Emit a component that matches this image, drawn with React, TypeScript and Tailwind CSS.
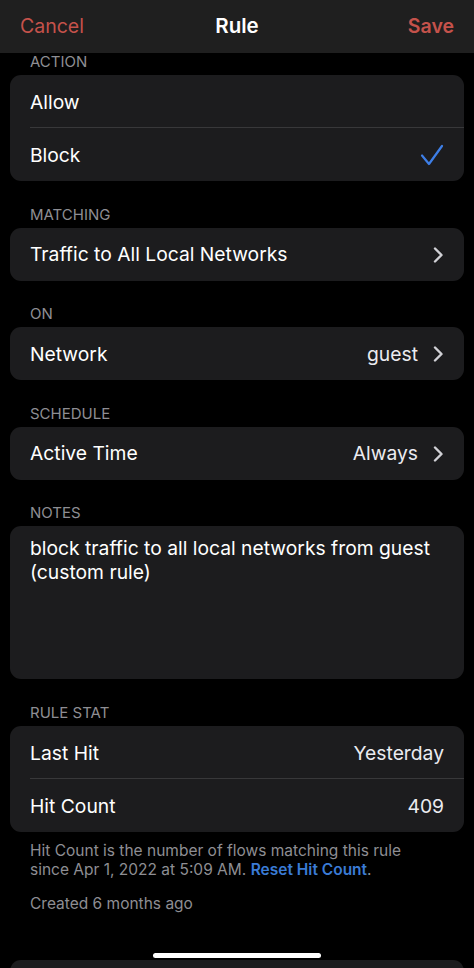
import React from "react";

const font = { fontFamily: "Inter, 'Noto Sans', 'Liberation Sans', sans-serif" };

function Chevron() {
  return (
    <svg width="11" height="16" viewBox="0 0 11 16" className="shrink-0">
      <path d="M2 1.5 L8.5 8 L2 14.5" fill="none" stroke="#d1d1d6" strokeWidth="2.4" strokeLinecap="round" strokeLinejoin="round" />
    </svg>
  );
}

function Check() {
  return (
    <svg width="24" height="22" viewBox="0 0 24 22">
      <path d="M2 11.5 L9 20 L22 2" fill="none" stroke="#3d7ee6" strokeWidth="2.2" strokeLinecap="round" strokeLinejoin="round" />
    </svg>
  );
}

function Label({ children, first }: { children: React.ReactNode; first?: boolean }) {
  return (
    <div className={`${first ? "" : "mt-[24.6px]"} mb-[4px] pl-[30px] text-[15px] leading-[18px] text-[#8e8e93] uppercase`}>
      {children}
    </div>
  );
}

function Row({ left, right, chevron, divider, check }: { left: string; right?: string; chevron?: boolean; divider?: boolean; check?: boolean }) {
  return (
    <div className="relative flex h-[53px] items-center pl-[20px] pr-[20px] pt-[1px]">
      <span className="text-[19.3px] text-white">{left}</span>
      <div className="ml-auto flex items-center gap-[15px]">
        {right && <span className="text-[19.3px] text-[#ebebf0]">{right}</span>}
        {chevron && <Chevron />}
        {check && <Check />}
      </div>
      {divider && <div className="absolute bottom-0 left-[20px] right-0 h-px bg-[#38383a]" />}
    </div>
  );
}

function Card({ children }: { children: React.ReactNode }) {
  return <div className="mx-[10px] overflow-hidden rounded-[11px] bg-[#1c1c1e]">{children}</div>;
}

export default function App() {
  return (
    <div style={font} className="relative h-[968px] w-[474px] overflow-hidden bg-black">
      <div className="relative flex h-[53px] items-center justify-between bg-[#1f1f1f] px-[20px]">
        <span className="text-[19.5px] text-[#c5524b]">Cancel</span>
        <span className="absolute left-1/2 -translate-x-1/2 text-[20.5px] font-semibold text-white">Rule</span>
        <span className="text-[19.5px] font-semibold text-[#c5524b]">Save</span>
      </div>

      <div>
        <Label first>Action</Label>
        <Card>
          <Row left="Allow" divider />
          <Row left="Block" check />
        </Card>

        <Label>Matching</Label>
        <Card>
          <Row left="Traffic to All Local Networks" chevron />
        </Card>

        <Label>On</Label>
        <Card>
          <Row left="Network" right="guest" chevron />
        </Card>

        <Label>Schedule</Label>
        <Card>
          <Row left="Active Time" right="Always" chevron />
        </Card>

        <Label>Notes</Label>
        <Card>
          <div className="h-[153px] px-[20px] pt-[10px] text-[19.3px] leading-[24px] text-white">
            block traffic to all local networks from guest (custom rule)
          </div>
        </Card>

        <Label>Rule Stat</Label>
        <Card>
          <Row left="Last Hit" right="Yesterday" divider />
          <Row left="Hit Count" right="409" />
        </Card>

        <div className="px-[30px] pt-[9px] text-[15.5px] leading-[19px] text-[#8e8e93]">
          Hit Count is the number of flows matching this rule since Apr 1, 2022 at 5:09 AM.{" "}
          <span className="font-semibold text-[#3a7bd5]">Reset Hit Count</span>.
        </div>
        <div className="px-[30px] pt-[15px] text-[15.5px] leading-[19px] text-[#8e8e93]">Created 6 months ago</div>

        <div className="mt-[47px] mx-[10px] h-[40px] rounded-t-[11px] bg-[#1c1c1e]" />
      </div>

      <div className="absolute left-[153px] top-[953px] h-[5px] w-[168px] rounded-full bg-white" />
    </div>
  );
}
